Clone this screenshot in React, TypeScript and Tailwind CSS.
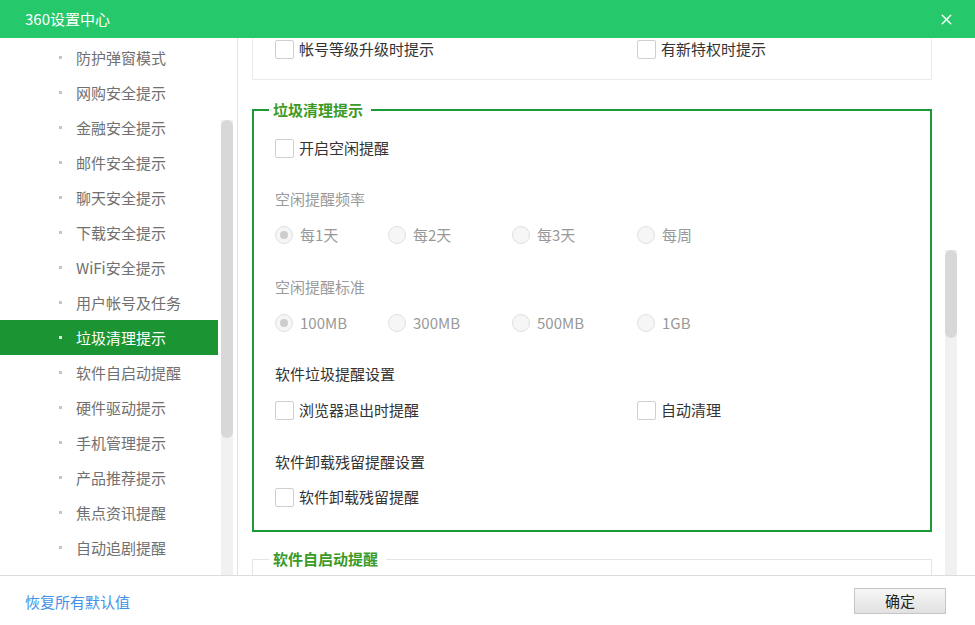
import { X } from 'lucide-react'

const NAV = [
  '防护弹窗模式',
  '网购安全提示',
  '金融安全提示',
  '邮件安全提示',
  '聊天安全提示',
  '下载安全提示',
  'WiFi安全提示',
  '用户帐号及任务',
  '垃圾清理提示',
  '软件自启动提醒',
  '硬件驱动提示',
  '手机管理提示',
  '产品推荐提示',
  '焦点资讯提醒',
  '自动追剧提醒',
]
const ACTIVE = '垃圾清理提示'

const FREQ = ['每1天', '每2天', '每3天', '每周']
const SIZES = ['100MB', '300MB', '500MB', '1GB']
const COL_W = ['w-[113px]', 'w-[124px]', 'w-[125px]', 'w-[100px]']

function Checkbox({ label }: { label: string }) {
  return (
    <label className="flex h-[20px] items-center gap-[5px] text-[#333]">
      <span className="h-[19px] w-[19px] rounded-[2px] border border-[#cfcfcf] bg-white" />
      {label}
    </label>
  )
}

function Radio({ label, checked }: { label: string; checked?: boolean }) {
  return (
    <span className="flex h-[20px] items-center gap-[7px] text-[#999]">
      <span className="flex h-[18px] w-[18px] items-center justify-center rounded-full border border-[#e0e0e0] bg-[#f6f6f6]">
        {checked && <span className="h-[8px] w-[8px] rounded-full bg-[#cdcdcd]" />}
      </span>
      {label}
    </span>
  )
}

function Scrollbar({ top, height }: { top: string; height: string }) {
  return (
    <div className="h-[500px] w-[12px] bg-[#f1f1f1]">
      <div className={`${top} ${height} w-full rounded-[6px] bg-[#d8d8d8]`} />
    </div>
  )
}

export default function App() {
  return (
    <div
      className="flex h-[625px] w-[975px] flex-col overflow-hidden bg-white text-[15px] leading-[20px]"
      style={{ fontFamily: '"Noto Sans CJK SC", "Noto Sans", sans-serif' }}
    >
      <header className="flex h-[38px] shrink-0 items-center justify-between bg-[#25c86a] pl-[25px] pr-[20px] text-white">
        <span>360设置中心</span>
        <X size={17} strokeWidth={2} />
      </header>

      <div className="flex min-h-0 flex-1 overflow-hidden">
        {/* 左侧导航 */}
        <aside className="flex w-[238px] shrink-0 border-r border-[#e2e2e2]">
          <ul className="w-[218px] pt-[2px]">
            {NAV.map((item) => {
              const on = item === ACTIVE
              return (
                <li
                  key={item}
                  className={`flex h-[35px] shrink-0 items-center pl-[59px] ${on ? 'bg-[#1b9433] text-white' : 'text-[#707070]'}`}
                >
                  <span className={`h-[3px] w-[3px] ${on ? 'bg-[#d8f0dc]' : 'bg-[#c4c4c4]'}`} />
                  <span className="ml-[14px]">{item}</span>
                </li>
              )
            })}
          </ul>
          <div className="ml-[3px] pt-[19px]">
            <Scrollbar top="mt-[63px]" height="h-[318px]" />
          </div>
        </aside>

        {/* 右侧设置 */}
        <main className="flex min-w-0 flex-1">
          <div className="w-[694px] shrink-0 pl-[14px]">
            <div className="flex h-[42px] border-x border-b border-[#ebebe6] pl-[22px] pt-[1px]">
              <div className="w-[362px]">
                <Checkbox label="帐号等级升级时提示" />
              </div>
              <Checkbox label="有新特权时提示" />
            </div>

            <fieldset className="mt-[20px] border-2 border-[#1c9a35] pb-[23px]">
              <legend className="ml-[15px] pl-[4px] pr-[8px] font-bold text-[#3c9a26]">垃圾清理提示</legend>

              <div className="pl-[21px]">
                <div className="mt-[18px]">
                  <Checkbox label="开启空闲提醒" />
                </div>

                <p className="mt-[31px] text-[#9a9a9a]">空闲提醒频率</p>
                <div className="mt-[16px] flex">
                  {FREQ.map((f, i) => (
                    <div key={f} className={COL_W[i]}>
                      <Radio label={f} checked={i === 0} />
                    </div>
                  ))}
                </div>

                <p className="mt-[32px] text-[#9a9a9a]">空闲提醒标准</p>
                <div className="mt-[16px] flex">
                  {SIZES.map((s, i) => (
                    <div key={s} className={COL_W[i]}>
                      <Radio label={s} checked={i === 0} />
                    </div>
                  ))}
                </div>

                <p className="mt-[31px] text-[#333]">软件垃圾提醒设置</p>
                <div className="mt-[16px] flex">
                  <div className="w-[362px]">
                    <Checkbox label="浏览器退出时提醒" />
                  </div>
                  <Checkbox label="自动清理" />
                </div>

                <p className="mt-[32px] text-[#333]">软件卸载残留提醒设置</p>
                <div className="mt-[15px]">
                  <Checkbox label="软件卸载残留提醒" />
                </div>
              </div>
            </fieldset>

            <fieldset className="mt-[17px] h-[60px] border border-[#e6e6e0]">
              <legend className="ml-[16px] pl-[4px] pr-[8px] font-bold text-[#3c9a26]">软件自启动提醒</legend>
            </fieldset>
          </div>

          <div className="ml-[13px] pt-[19px]">
            <Scrollbar top="mt-[193px]" height="h-[88px]" />
          </div>
        </main>
      </div>

      <footer className="flex h-[50px] shrink-0 items-center justify-between border-t border-[#dcdcdc] bg-white pl-[25px] pr-[29px]">
        <a className="mt-[3px] text-[#3f92e6]">恢复所有默认值</a>
        <button className="h-[26px] w-[92px] border border-[#c6c6c6] bg-gradient-to-b from-[#f7f7f7] to-[#e1e1e1] text-[#222]">
          确定
        </button>
      </footer>
    </div>
  )
}
